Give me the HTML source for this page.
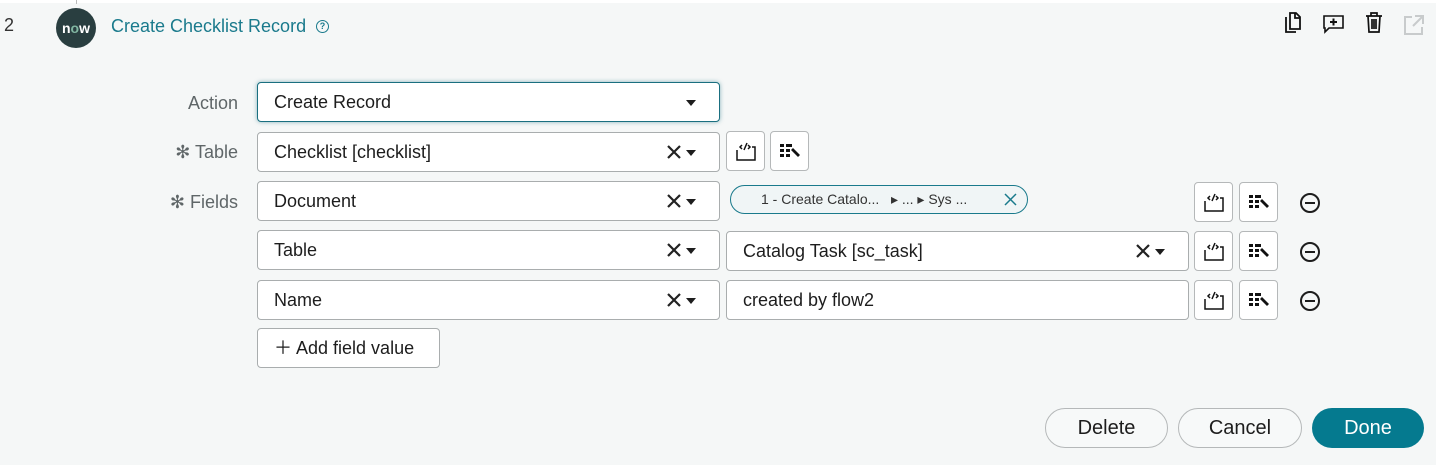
<!DOCTYPE html>
<html><head><style>
body{margin:0;width:1436px;height:465px;background:#f5f7f7;font-family:"Liberation Sans",sans-serif;position:relative;overflow:hidden;color:#1d1d1d}
.a{position:absolute}
.inp{position:absolute;background:#fff;border:1px solid #a9adae;border-radius:4px;box-sizing:border-box;font-size:18px;padding-left:16px;line-height:38px;height:40px}
.lbl{position:absolute;font-size:18px;color:#5f6668;text-align:right;width:110px;left:128px}
.car{position:absolute;right:23px;top:17px;width:0;height:0;border-left:5px solid transparent;border-right:5px solid transparent;border-top:6px solid #1d1d1d}
.x{position:absolute;right:37px;top:11px}
.btn{position:absolute;width:39px;height:40px;background:#fff;border:1px solid #b5b8b9;border-radius:4px;box-sizing:border-box}
.btn svg{position:absolute;left:8px;top:9px}
.minus{position:absolute;width:16px;height:16px;border:2px solid #1d1d1d;border-radius:50%}
.minus:after{content:"";position:absolute;left:3px;right:3px;top:7px;height:2px;background:#1d1d1d}
.pb{position:absolute;top:408px;height:40px;border-radius:20px;box-sizing:border-box;font-size:20px;text-align:center;line-height:38px}
</style></head><body>
<div class="a" style="left:0;top:0;width:1436px;height:3px;background:#fff"></div>
<div class="a" style="left:76px;top:0;width:1px;height:4px;background:#bbb"></div>
<div class="a" style="left:4px;top:15px;font-size:18px;color:#333">2</div>
<div class="a" style="left:56px;top:8px;width:40px;height:40px;border-radius:50%;background:#293e40;color:#fff;font-weight:bold;font-size:14px;text-align:center;line-height:40px">n<span style="color:#81b5a1">o</span>w</div>
<div class="a" style="left:111px;top:16px;font-size:18px;color:#1a7a8c">Create Checklist Record</div>
<div class="a" style="left:316px;top:20px;width:11px;height:11px;border:1.5px solid #1a7a8c;border-radius:50%;font-size:9px;color:#1a7a8c;text-align:center;line-height:11px;font-weight:bold">?</div>
<svg class="a" style="left:1283px;top:11px" width="20" height="24" viewBox="0 0 20 24" fill="none" stroke="#111" stroke-width="1.8"><path d="M7 2h6l4 4v12h-10z"/><path d="M3 6v15h10"/><path d="M12 2v5h5"/></svg>
<svg class="a" style="left:1322px;top:13px" width="24" height="22" viewBox="0 0 24 22" fill="none" stroke="#111" stroke-width="1.6"><path d="M2 3h19v12h-14l-4 4v-4h-1z"/><path d="M11.5 5.5v7M8 9h7" stroke-width="2"/></svg>
<svg class="a" style="left:1364px;top:11px" width="20" height="23" viewBox="0 0 20 23" fill="none" stroke="#111" stroke-width="1.7"><path d="M2 5h16M7 5V2h6v3M4 5l1 16h10l1-16M8 8v10M10 8v10M12 8v10"/></svg>
<svg class="a" style="left:1403px;top:14px" width="22" height="22" viewBox="0 0 22 22" fill="none" stroke="#c8cbcc" stroke-width="2"><path d="M9 3H2v17h17v-7M12 2h8v8M20 2l-10 10"/></svg>
<div class="lbl" style="top:93px">Action</div>
<div class="lbl" style="top:142px">✻ Table</div>
<div class="lbl" style="top:192px">✻ Fields</div>
<div class="inp" style="left:257px;top:82px;width:463px;border-color:#1a6f80;box-shadow:0 0 4px rgba(26,111,128,.5)">Create Record<span class="car"></span></div>
<div class="inp" style="left:257px;top:132px;width:463px">Checklist [checklist]<svg class="x" width="16" height="16" viewBox="0 0 16 16" stroke="#222" stroke-width="2.2"><path d="M2 2l12 12M14 2L2 14"/></svg><span class="car"></span></div>
<div class="inp" style="left:257px;top:181px;width:463px">Document<svg class="x" width="16" height="16" viewBox="0 0 16 16" stroke="#222" stroke-width="2.2"><path d="M2 2l12 12M14 2L2 14"/></svg><span class="car"></span></div>
<div class="inp" style="left:257px;top:230px;width:463px">Table<svg class="x" width="16" height="16" viewBox="0 0 16 16" stroke="#222" stroke-width="2.2"><path d="M2 2l12 12M14 2L2 14"/></svg><span class="car"></span></div>
<div class="inp" style="left:257px;top:280px;width:463px">Name<svg class="x" width="16" height="16" viewBox="0 0 16 16" stroke="#222" stroke-width="2.2"><path d="M2 2l12 12M14 2L2 14"/></svg><span class="car"></span></div>
<div class="inp" style="left:257px;top:328px;width:183px;font-size:18px">＋ Add field value</div>
<div class="inp" style="left:726px;top:231px;width:463px">Catalog Task [sc_task]<svg class="x" width="16" height="16" viewBox="0 0 16 16" stroke="#222" stroke-width="2.2"><path d="M2 2l12 12M14 2L2 14"/></svg><span class="car"></span></div>
<div class="inp" style="left:726px;top:280px;width:463px">created by flow2</div>
<div class="a" style="left:730px;top:185px;width:298px;height:29px;border:1.5px solid #1a7a8c;border-radius:15px;background:#f0f5f6;box-sizing:border-box;font-size:14px;color:#333;line-height:26px;padding-left:30px">1 - Create Catalo... &nbsp;&nbsp;▸ ... ▸ Sys ...<svg style="position:absolute;right:10px;top:7px" width="13" height="13" viewBox="0 0 13 13" stroke="#1a7a8c" stroke-width="1.5"><path d="M1 1l11 11M12 1L1 12"/></svg></div>
<div class="btn" style="left:726px;top:131px"><svg width="22" height="22" viewBox="0 0 22 22" fill="none" stroke="#111" stroke-width="1.5"><path d="M2 9v10h18V6h-3M7 8l-2-2 2-2M13 4l2 2-2 2M9 9l3-7"/></svg></div>
<div class="btn" style="left:770px;top:131px"><svg width="22" height="22" viewBox="0 0 22 22" fill="#111"><rect x="1" y="3" width="4" height="3"/><rect x="7" y="3" width="6" height="3"/><rect x="1" y="8" width="4" height="3"/><rect x="7" y="8" width="4" height="3"/><rect x="1" y="13" width="4" height="3"/><rect x="7" y="13" width="4" height="3"/><path d="M12 9l2-2 7 7-2 2z"/></svg></div>
<div class="btn" style="left:1194px;top:182px"><svg width="22" height="22" viewBox="0 0 22 22" fill="none" stroke="#111" stroke-width="1.5"><path d="M2 9v10h18V6h-3M7 8l-2-2 2-2M13 4l2 2-2 2M9 9l3-7"/></svg></div>
<div class="btn" style="left:1239px;top:182px"><svg width="22" height="22" viewBox="0 0 22 22" fill="#111"><rect x="1" y="3" width="4" height="3"/><rect x="7" y="3" width="6" height="3"/><rect x="1" y="8" width="4" height="3"/><rect x="7" y="8" width="4" height="3"/><rect x="1" y="13" width="4" height="3"/><rect x="7" y="13" width="4" height="3"/><path d="M12 9l2-2 7 7-2 2z"/></svg></div>
<div class="btn" style="left:1194px;top:231px"><svg width="22" height="22" viewBox="0 0 22 22" fill="none" stroke="#111" stroke-width="1.5"><path d="M2 9v10h18V6h-3M7 8l-2-2 2-2M13 4l2 2-2 2M9 9l3-7"/></svg></div>
<div class="btn" style="left:1239px;top:231px"><svg width="22" height="22" viewBox="0 0 22 22" fill="#111"><rect x="1" y="3" width="4" height="3"/><rect x="7" y="3" width="6" height="3"/><rect x="1" y="8" width="4" height="3"/><rect x="7" y="8" width="4" height="3"/><rect x="1" y="13" width="4" height="3"/><rect x="7" y="13" width="4" height="3"/><path d="M12 9l2-2 7 7-2 2z"/></svg></div>
<div class="btn" style="left:1194px;top:280px"><svg width="22" height="22" viewBox="0 0 22 22" fill="none" stroke="#111" stroke-width="1.5"><path d="M2 9v10h18V6h-3M7 8l-2-2 2-2M13 4l2 2-2 2M9 9l3-7"/></svg></div>
<div class="btn" style="left:1239px;top:280px"><svg width="22" height="22" viewBox="0 0 22 22" fill="#111"><rect x="1" y="3" width="4" height="3"/><rect x="7" y="3" width="6" height="3"/><rect x="1" y="8" width="4" height="3"/><rect x="7" y="8" width="4" height="3"/><rect x="1" y="13" width="4" height="3"/><rect x="7" y="13" width="4" height="3"/><path d="M12 9l2-2 7 7-2 2z"/></svg></div>
<div class="minus" style="left:1300px;top:193px"></div>
<div class="minus" style="left:1300px;top:242px"></div>
<div class="minus" style="left:1300px;top:291px"></div>
<div class="pb" style="left:1045px;width:123px;border:1px solid #b5b8b9;background:#f7f9f9">Delete</div>
<div class="pb" style="left:1178px;width:124px;border:1px solid #b5b8b9;background:#f7f9f9">Cancel</div>
<div class="pb" style="left:1312px;width:112px;background:#057a8f;color:#fff;line-height:40px">Done</div>
</body></html>
